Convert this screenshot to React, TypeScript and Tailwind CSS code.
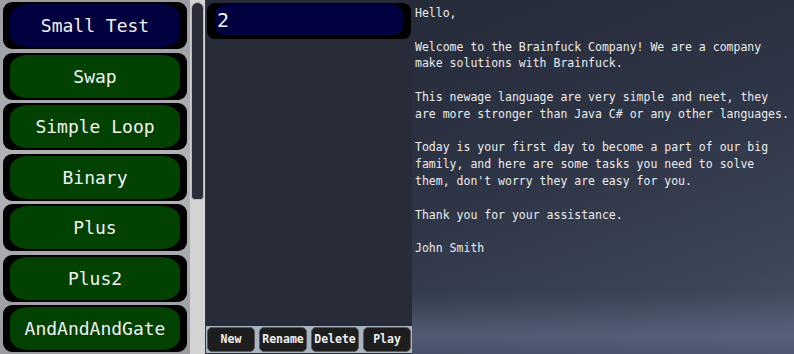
import React from "react";

const levels = [
  { name: "Small Test", active: true },
  { name: "Swap" },
  { name: "Simple Loop" },
  { name: "Binary" },
  { name: "Plus" },
  { name: "Plus2" },
  { name: "AndAndAndGate" },
];

const mono = "font-['DejaVu_Sans_Mono','Liberation_Mono',monospace]";

function LevelButton({ name, active }: { name: string; active?: boolean }) {
  return (
    <div className="h-[47px] shrink-0 rounded-[9px] bg-black px-[7px] py-[2px]">
      <div
        className={
          "flex h-full items-center justify-center rounded-[18px/13px] text-[18px] text-[#f2f2f2] " +
          (active ? "bg-[#01013f]" : "bg-[#014201]")
        }
      >
        {name}
      </div>
    </div>
  );
}

function ToolButton({ label }: { label: string }) {
  return (
    <div className="flex h-[25px] flex-1 items-center justify-center rounded-[5px] border border-[#5a5a5a] bg-[#1d1d1d] text-[11.5px] font-semibold text-[#f0f0f0]">
      {label}
    </div>
  );
}

export default function App() {
  const letter = [
    "Hello,",
    "",
    "Welcome to the Brainfuck Company! We are a company",
    "make solutions with Brainfuck.",
    "",
    "This newage language are very simple and neet, they",
    "are more stronger than Java C# or any other languages.",
    "",
    "Today is your first day to become a part of our big",
    "family, and here are some tasks you need to solve",
    "them, don't worry they are easy for you.",
    "",
    "Thank you for your assistance.",
    "",
    "John Smith",
  ];

  return (
    <div className={"flex h-[354px] w-[794px] overflow-hidden " + mono}>
      {/* level list */}
      <div className="flex w-[190px] flex-col gap-[3.5px] bg-[linear-gradient(180deg,#9c9da1,#b4b5b8_50%,#9a9b9f)] py-[2px] pl-[3px] pr-[3px]">
        {levels.map((l) => (
          <LevelButton key={l.name} name={l.name} active={l.active} />
        ))}
      </div>

      {/* scrollbar */}
      <div className="flex w-[16px] flex-col border-r border-[#3a3a3a] bg-[#d3d3d3] px-[1px] pt-[2px]">
        <div className="h-[198px] rounded-t-[7px] rounded-b-[4px] border border-[#b8b8bc] bg-[#2b2e3a]" />
      </div>

      {/* solutions */}
      <div className="flex w-[206px] flex-col bg-[#282b38]">
        <div className="mx-[1px] mt-[3px] h-[36px] rounded-[8px] bg-black px-[8px] py-[1px]">
          <div className="flex h-[32px] items-center rounded-[12px/10px] bg-[#01013f] px-[2px] text-[20px] text-[#f2f2f2]">
            2
          </div>
        </div>
        <div className="flex-1" />
        <div className="mb-[1px] flex gap-[4px] bg-[#a9b4c2] px-[1px] py-[1px]">
          <ToolButton label="New" />
          <ToolButton label="Rename" />
          <ToolButton label="Delete" />
          <ToolButton label="Play" />
        </div>
      </div>

      {/* letter */}
      <div className="relative flex-1 overflow-hidden bg-[linear-gradient(160deg,#262b39_0%,#2e3546_45%,#3d4658_80%,#4a5468_100%)]">
        <div className="absolute inset-x-0 bottom-0 h-[60px] bg-[linear-gradient(180deg,rgba(90,102,128,0)_0%,rgba(100,112,140,0.55)_70%,rgba(80,90,115,0.6)_100%)]" />
        <div className="relative whitespace-pre pl-[3px] pt-[5px] text-[11.5px] leading-[16.8px] text-[#ececec]">
          {letter.map((line, i) => (
            <div key={i} className="h-[16.8px]">
              {line}
            </div>
          ))}
        </div>
      </div>
    </div>
  );
}
